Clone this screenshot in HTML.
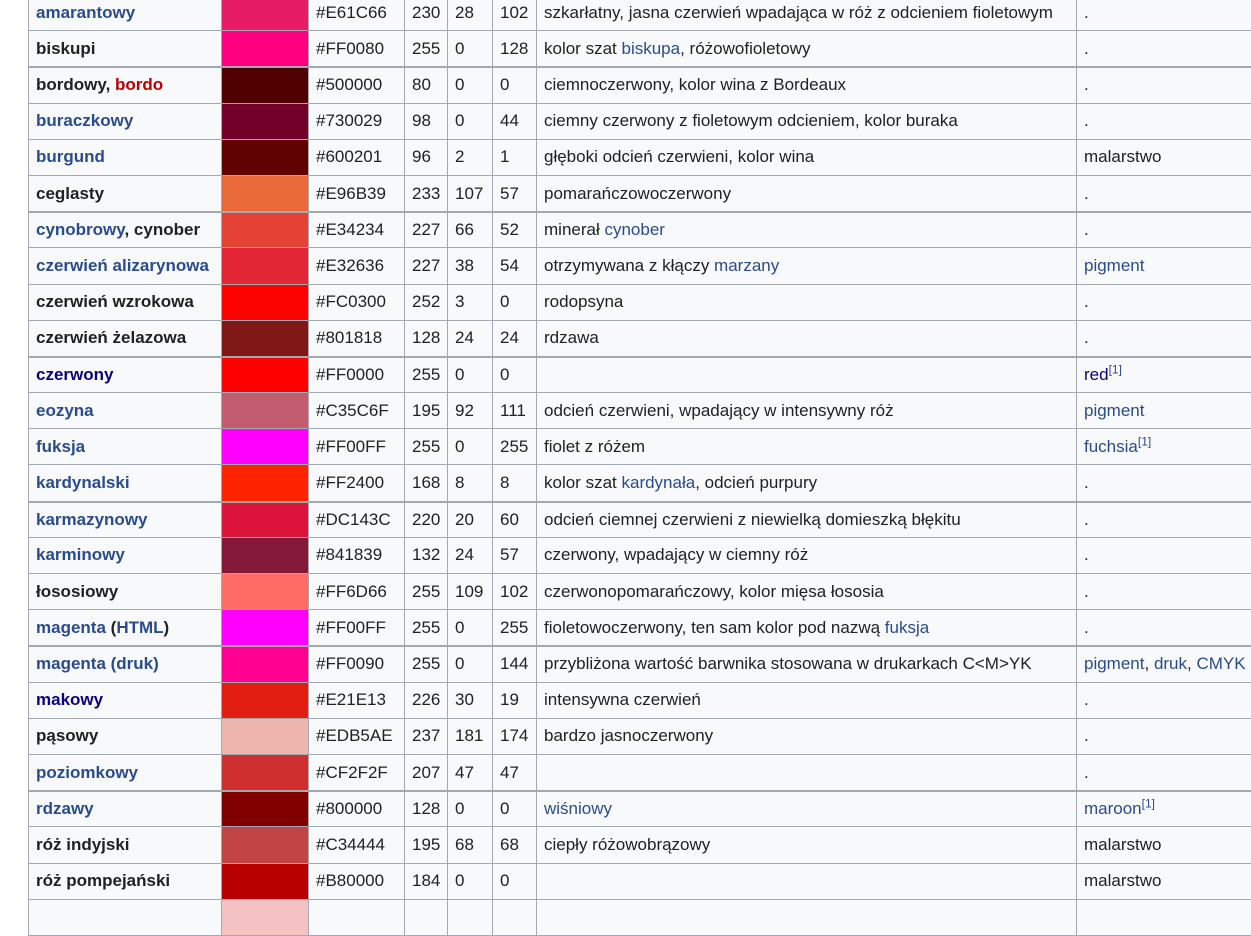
<!DOCTYPE html>
<html><head><meta charset="utf-8"><style>
body{margin:0;background:#fff;width:1251px;height:903px;overflow:hidden;position:relative;font-family:"Liberation Sans",Arial,sans-serif;font-size:17px;color:#202122}
table{position:absolute;left:28px;top:-6px;border-collapse:collapse;table-layout:fixed;width:1240px}
td{border:1px solid #a2a9b1;background:#f8f9fa;padding:0 0 0 7px;height:35.2px;white-space:nowrap;overflow:hidden}
tr.t td{border-top:2px solid #a2a9b1;height:34.2px}
td.n{font-weight:bold}
td.c{padding:0}
a{color:#2a4b8d;text-decoration:none}
a.v{color:#0b0080}
a.r{color:#ba0000}
sup{font-size:12px;line-height:0}
</style></head><body>
<table>
<colgroup><col style="width:193px"><col style="width:87px"><col style="width:96px"><col style="width:43px"><col style="width:45px"><col style="width:44px"><col style="width:540px"><col style="width:192px"></colgroup>
<tr><td class="n"><a>amarantowy</a></td><td class="c" style="background:#E61C66"></td><td>#E61C66</td><td>230</td><td>28</td><td>102</td><td>szkarłatny, jasna czerwień wpadająca w róż z odcieniem fioletowym</td><td>.</td></tr>
<tr><td class="n">biskupi</td><td class="c" style="background:#FF0080"></td><td>#FF0080</td><td>255</td><td>0</td><td>128</td><td>kolor szat <a>biskupa</a>, różowofioletowy</td><td>.</td></tr>
<tr class="t"><td class="n">bordowy, <a class="r">bordo</a></td><td class="c" style="background:#500000"></td><td>#500000</td><td>80</td><td>0</td><td>0</td><td>ciemnoczerwony, kolor wina z Bordeaux</td><td>.</td></tr>
<tr><td class="n"><a>buraczkowy</a></td><td class="c" style="background:#730029"></td><td>#730029</td><td>98</td><td>0</td><td>44</td><td>ciemny czerwony z fioletowym odcieniem, kolor buraka</td><td>.</td></tr>
<tr><td class="n"><a>burgund</a></td><td class="c" style="background:#600201"></td><td>#600201</td><td>96</td><td>2</td><td>1</td><td>głęboki odcień czerwieni, kolor wina</td><td>malarstwo</td></tr>
<tr><td class="n">ceglasty</td><td class="c" style="background:#E96B39"></td><td>#E96B39</td><td>233</td><td>107</td><td>57</td><td>pomarańczowoczerwony</td><td>.</td></tr>
<tr class="t"><td class="n"><a>cynobrowy</a>, cynober</td><td class="c" style="background:#E34234"></td><td>#E34234</td><td>227</td><td>66</td><td>52</td><td>minerał <a>cynober</a></td><td>.</td></tr>
<tr><td class="n"><a>czerwień alizarynowa</a></td><td class="c" style="background:#E32636"></td><td>#E32636</td><td>227</td><td>38</td><td>54</td><td>otrzymywana z kłączy <a>marzany</a></td><td><a>pigment</a></td></tr>
<tr><td class="n">czerwień wzrokowa</td><td class="c" style="background:#FC0300"></td><td>#FC0300</td><td>252</td><td>3</td><td>0</td><td>rodopsyna</td><td>.</td></tr>
<tr><td class="n">czerwień żelazowa</td><td class="c" style="background:#801818"></td><td>#801818</td><td>128</td><td>24</td><td>24</td><td>rdzawa</td><td>.</td></tr>
<tr class="t"><td class="n"><a class="v">czerwony</a></td><td class="c" style="background:#FF0000"></td><td>#FF0000</td><td>255</td><td>0</td><td>0</td><td></td><td><a class="v">red</a><sup><a>[1]</a></sup></td></tr>
<tr><td class="n"><a>eozyna</a></td><td class="c" style="background:#C35C6F"></td><td>#C35C6F</td><td>195</td><td>92</td><td>111</td><td>odcień czerwieni, wpadający w intensywny róż</td><td><a>pigment</a></td></tr>
<tr><td class="n"><a>fuksja</a></td><td class="c" style="background:#FF00FF"></td><td>#FF00FF</td><td>255</td><td>0</td><td>255</td><td>fiolet z różem</td><td><a>fuchsia</a><sup><a>[1]</a></sup></td></tr>
<tr><td class="n"><a>kardynalski</a></td><td class="c" style="background:#FF2400"></td><td>#FF2400</td><td>168</td><td>8</td><td>8</td><td>kolor szat <a>kardynała</a>, odcień purpury</td><td>.</td></tr>
<tr class="t"><td class="n"><a>karmazynowy</a></td><td class="c" style="background:#DC143C"></td><td>#DC143C</td><td>220</td><td>20</td><td>60</td><td>odcień ciemnej czerwieni z niewielką domieszką błękitu</td><td>.</td></tr>
<tr><td class="n"><a>karminowy</a></td><td class="c" style="background:#841839"></td><td>#841839</td><td>132</td><td>24</td><td>57</td><td>czerwony, wpadający w ciemny róż</td><td>.</td></tr>
<tr><td class="n">łososiowy</td><td class="c" style="background:#FF6D66"></td><td>#FF6D66</td><td>255</td><td>109</td><td>102</td><td>czerwonopomarańczowy, kolor mięsa łososia</td><td>.</td></tr>
<tr><td class="n"><a>magenta</a> (<a>HTML</a>)</td><td class="c" style="background:#FF00FF"></td><td>#FF00FF</td><td>255</td><td>0</td><td>255</td><td>fioletowoczerwony, ten sam kolor pod nazwą <a>fuksja</a></td><td>.</td></tr>
<tr class="t"><td class="n"><a>magenta (druk)</a></td><td class="c" style="background:#FF0090"></td><td>#FF0090</td><td>255</td><td>0</td><td>144</td><td>przybliżona wartość barwnika stosowana w drukarkach C&lt;M&gt;YK</td><td><a>pigment</a>, <a>druk</a>, <a>CMYK</a></td></tr>
<tr><td class="n"><a class="v">makowy</a></td><td class="c" style="background:#E21E13"></td><td>#E21E13</td><td>226</td><td>30</td><td>19</td><td>intensywna czerwień</td><td>.</td></tr>
<tr><td class="n">pąsowy</td><td class="c" style="background:#EDB5AE"></td><td>#EDB5AE</td><td>237</td><td>181</td><td>174</td><td>bardzo jasnoczerwony</td><td>.</td></tr>
<tr><td class="n"><a>poziomkowy</a></td><td class="c" style="background:#CF2F2F"></td><td>#CF2F2F</td><td>207</td><td>47</td><td>47</td><td></td><td>.</td></tr>
<tr class="t"><td class="n"><a>rdzawy</a></td><td class="c" style="background:#800000"></td><td>#800000</td><td>128</td><td>0</td><td>0</td><td><a>wiśniowy</a></td><td><a>maroon</a><sup><a>[1]</a></sup></td></tr>
<tr><td class="n">róż indyjski</td><td class="c" style="background:#C34444"></td><td>#C34444</td><td>195</td><td>68</td><td>68</td><td>ciepły różowobrązowy</td><td>malarstwo</td></tr>
<tr><td class="n">róż pompejański</td><td class="c" style="background:#B80000"></td><td>#B80000</td><td>184</td><td>0</td><td>0</td><td></td><td>malarstwo</td></tr>
<tr><td class="n">&nbsp;</td><td class="c" style="background:#F4C2C2"></td><td></td><td></td><td></td><td></td><td></td><td></td></tr>
</table>
</body></html>
